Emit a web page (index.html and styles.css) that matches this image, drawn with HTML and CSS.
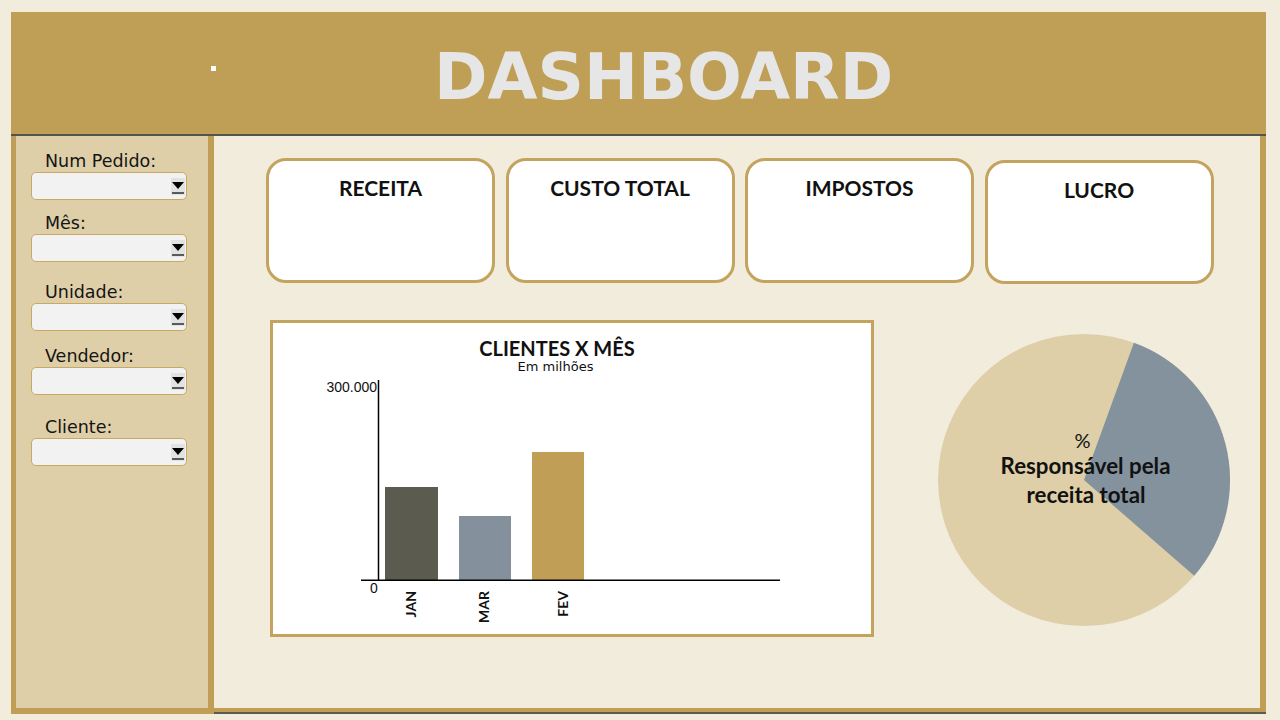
FILE: index.html
```html
<!DOCTYPE html>
<html lang="pt">
<head>
<meta charset="utf-8">
<title>Dashboard</title>
<link rel="stylesheet" href="styles.css">
</head>
<body>
<div class="frame">
  <header class="header">
    <span class="dot"></span>
    <h1 class="title">DASHBOARD</h1>
  </header>
  <div class="content">
    <aside class="sidebar">
      <div class="field field-1">
        <div class="field-label">Num Pedido:</div>
        <div class="select"><span class="select-btn"><svg width="14" height="17" viewBox="0 0 14 17"><polygon points="1,4 13,4 7,11" fill="#000"/><rect x="1" y="14" width="12" height="2" fill="#5a5a5a"/></svg></span></div>
      </div>
      <div class="field field-2">
        <div class="field-label">Mês:</div>
        <div class="select"><span class="select-btn"><svg width="14" height="17" viewBox="0 0 14 17"><polygon points="1,4 13,4 7,11" fill="#000"/><rect x="1" y="14" width="12" height="2" fill="#5a5a5a"/></svg></span></div>
      </div>
      <div class="field field-3">
        <div class="field-label">Unidade:</div>
        <div class="select"><span class="select-btn"><svg width="14" height="17" viewBox="0 0 14 17"><polygon points="1,4 13,4 7,11" fill="#000"/><rect x="1" y="14" width="12" height="2" fill="#5a5a5a"/></svg></span></div>
      </div>
      <div class="field field-4">
        <div class="field-label">Vendedor:</div>
        <div class="select"><span class="select-btn"><svg width="14" height="17" viewBox="0 0 14 17"><polygon points="1,4 13,4 7,11" fill="#000"/><rect x="1" y="14" width="12" height="2" fill="#5a5a5a"/></svg></span></div>
      </div>
      <div class="field field-5">
        <div class="field-label">Cliente:</div>
        <div class="select"><span class="select-btn"><svg width="14" height="17" viewBox="0 0 14 17"><polygon points="1,4 13,4 7,11" fill="#000"/><rect x="1" y="14" width="12" height="2" fill="#5a5a5a"/></svg></span></div>
      </div>
    </aside>
    <main class="main">
      <div class="cards">
        <div class="card"><div class="card-title">RECEITA</div></div>
        <div class="card"><div class="card-title">CUSTO TOTAL</div></div>
        <div class="card"><div class="card-title">IMPOSTOS</div></div>
        <div class="card card-low"><div class="card-title">LUCRO</div></div>
      </div>
      <div class="charts">
        <div class="chart-box">
          <svg class="chart-svg" width="598" height="311" viewBox="0 0 598 311">
            <text class="chart-title" x="284" y="33" text-anchor="middle">CLIENTES X MÊS</text>
            <text class="chart-sub" x="282.5" y="48" text-anchor="middle">Em milhões</text>
            <text class="axis-label" x="104" y="69" text-anchor="end">300.000</text>
            <text class="axis-label" x="97" y="270">0</text>
            <rect x="112" y="164" width="53" height="93" fill="#5b5b50"/>
            <rect x="186" y="193" width="52" height="64" fill="#84919d"/>
            <rect x="259" y="129" width="52" height="128" fill="#c09e55"/>
            <line x1="105.5" y1="57" x2="105.5" y2="258" stroke="#000" stroke-width="1.5"/>
            <line x1="88" y1="257.25" x2="507" y2="257.25" stroke="#000" stroke-width="1.5"/>
            <text class="bar-label" transform="translate(143 268) rotate(-90)" text-anchor="end">JAN</text>
            <text class="bar-label" transform="translate(216 268) rotate(-90)" text-anchor="end">MAR</text>
            <text class="bar-label" transform="translate(295 268) rotate(-90)" text-anchor="end">FEV</text>
          </svg>
        </div>
        <div class="pie">
          <svg class="pie-svg" width="292" height="292" viewBox="0 0 292 292">
            <circle cx="146" cy="146" r="146" fill="#dfcfa8"/>
            <path d="M146 146 L195.9 8.8 A146 146 0 0 1 256.2 241.8 Z" fill="#84929e"/>
            <text class="pie-pct" x="144.5" y="114" text-anchor="middle">%</text>
            <text class="pie-text" x="147.5" y="140" text-anchor="middle">Responsável pela</text>
            <text class="pie-text" x="148" y="169" text-anchor="middle">receita total</text>
          </svg>
        </div>
      </div>
    </main>
  </div>
</div>
</body>
</html>
```

FILE: styles.css
```css
* {
  box-sizing: border-box;
}

html, body {
  margin: 0;
  padding: 0;
}

body {
  width: 1280px;
  height: 720px;
  overflow: hidden;
  background: #f2ecdd;
  font-family: "DejaVu Sans", sans-serif;
  color: #111;
}

.frame {
  margin: 12px 0 0 11px;
  width: 1255px;
}

.header {
  height: 124px;
  background: #bf9e55;
  border-bottom: 2px solid #54544b;
  display: flex;
  align-items: center;
  padding-top: 9px;
}

.dot {
  width: 5px;
  height: 5px;
  background: #ffffff;
  margin-left: 200px;
  align-self: flex-start;
  margin-top: 45px;
}

.title {
  margin: 0 0 0 218px;
  font-family: "DejaVu Sans", sans-serif;
  font-weight: bold;
  font-size: 64.5px;
  line-height: 1;
  color: #e6e6e6;
}

.content {
  display: flex;
  height: 578px;
}

.sidebar {
  width: 203px;
  height: 578px;
  background: #dfcfa8;
  border-left: 5px solid #c09e55;
  border-right: 6px solid #c09e55;
  border-bottom: 6px solid #c09e55;
  padding-left: 15px;
}

.field-label {
  font-family: "DejaVu Sans", sans-serif;
  font-size: 17.5px;
  line-height: 19px;
  padding-left: 14px;
  color: #141414;
}

.field-1 { margin-top: 16px; }
.field-2 { margin-top: 14px; }
.field-3 { margin-top: 21px; }
.field-4 { margin-top: 16px; }
.field-5 { margin-top: 23px; }

.select {
  width: 156px;
  height: 28px;
  margin-top: 1px;
  background: #f2f2f2;
  border: 1.5px solid #c8a964;
  border-radius: 5px;
  display: flex;
  align-items: center;
  justify-content: flex-end;
  padding-right: 1px;
}

.select-btn {
  display: block;
  width: 14px;
  height: 17px;
  background: #e2e2e2;
}

.select-btn svg {
  display: block;
}

.main {
  flex: 1;
  height: 576px;
  border-right: 6px solid #c09e55;
  border-bottom: 4px solid #c09e55;
  box-shadow: 0 2px 0 #5b5b52;
  padding: 22px 0 0 52px;
}

.cards {
  display: flex;
  align-items: flex-start;
  gap: 10.5px;
}

.card {
  width: 229px;
  height: 125px;
  background: #ffffff;
  border: 3px solid #c4a35e;
  border-radius: 20px;
  text-align: center;
  padding-top: 15px;
}

.card-low {
  margin-top: 2px;
  margin-bottom: -2px;
  height: 124px;
}

.card-title {
  font-family: Lato, sans-serif;
  font-weight: bold;
  font-size: 21px;
  line-height: 24px;
  color: #111;
}

.charts {
  display: flex;
  align-items: flex-start;
  margin-top: 37px;
  margin-left: 4px;
  gap: 64px;
}

.chart-box {
  width: 604px;
  height: 317px;
  background: #ffffff;
  border: 3px solid #c4a35e;
}

.chart-svg {
  display: block;
}

.chart-title {
  font-family: Lato, sans-serif;
  font-weight: bold;
  font-size: 20px;
  fill: #111;
}

.chart-sub {
  font-family: "DejaVu Sans", sans-serif;
  font-size: 13px;
  fill: #111;
}

.axis-label {
  font-family: "Liberation Sans", Arial, sans-serif;
  font-size: 14px;
  fill: #111;
}

.bar-label {
  font-family: Lato, sans-serif;
  font-weight: bold;
  font-size: 14px;
  fill: #111;
}

.pie {
  margin-top: 14px;
  width: 292px;
  height: 292px;
}

.pie-svg {
  display: block;
}

.pie-pct {
  font-family: Lato, sans-serif;
  font-size: 20px;
  fill: #111;
}

.pie-text {
  font-family: Lato, sans-serif;
  font-weight: bold;
  font-size: 22.3px;
  fill: #111;
}
```
